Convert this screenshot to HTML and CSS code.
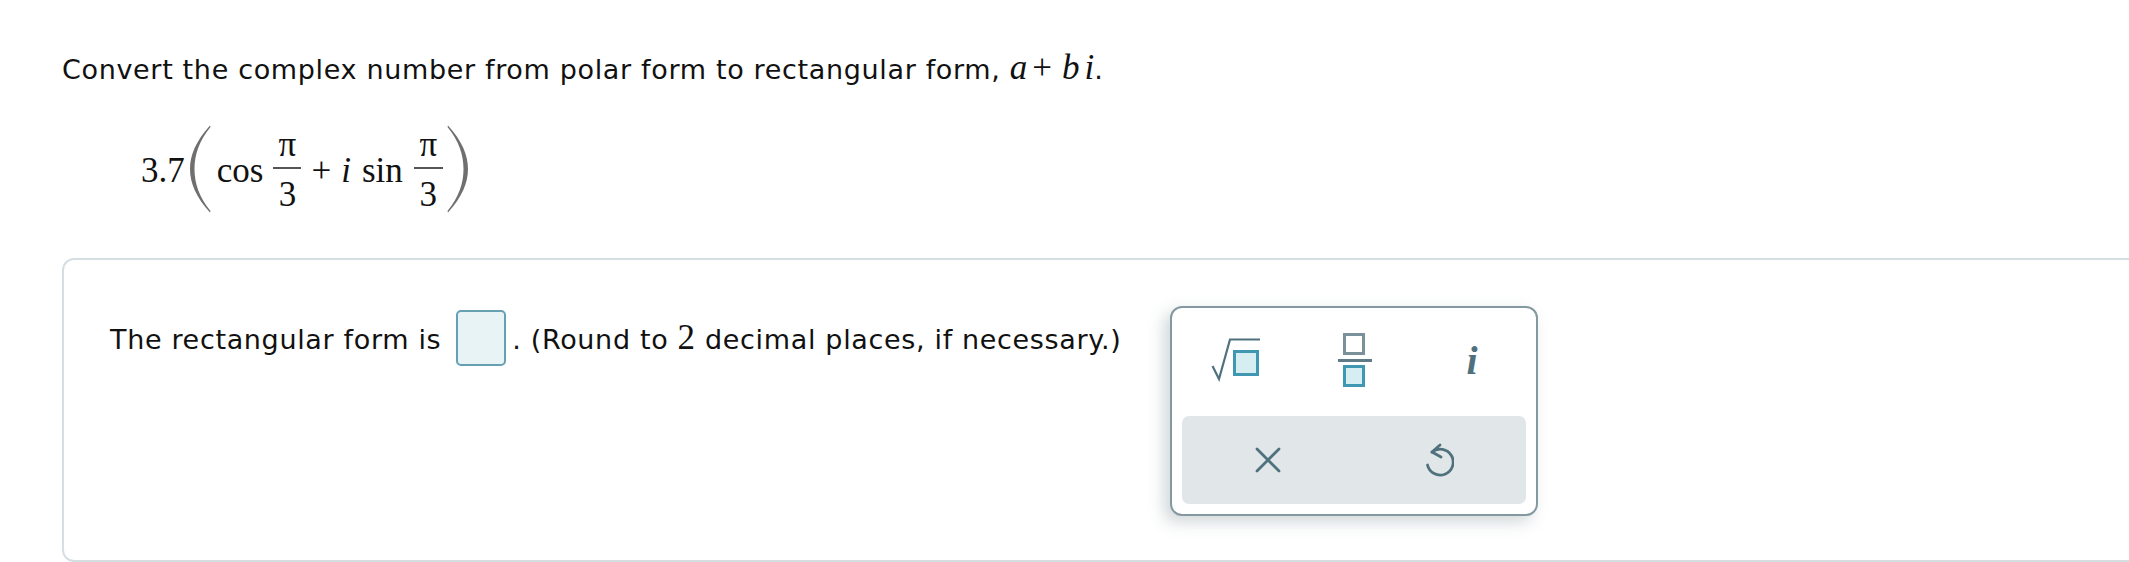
FILE: index.html
```html
<!DOCTYPE html>
<html>
<head>
    <meta charset="UTF-8">
    <title>Polar to Rectangular</title>
    <link rel="stylesheet" href="styles.css">
</head>
<body>
    <p class="question">Convert the complex number from polar form to rectangular form, <span class="math-inline"><i>a</i><span class="plus">+</span><i>b</i><i class="unit">i</i></span>.</p>

    <!-- 3.7(cos pi/3 + i sin pi/3) -->
    <div class="formula">
        <span class="mi coef">3.7</span>
        <svg class="paren" width="22" height="88" viewBox="0 0 22 88">
            <path d="M21 0.5 C 7 16, 1 30, 1 44 C 1 58, 7 72, 21 87.5 L 21.5 86 C 10 72, 5.5 58, 5.5 44 C 5.5 30, 10 16, 21.5 2 Z" fill="#6f6f6f"/>
        </svg>
        <span class="mi fn-cos">cos</span>
        <span class="frac"><span class="num">π</span><span class="den">3</span></span>
        <span class="mi op">+</span>
        <i class="mi imag">i</i>
        <span class="mi fn-sin">sin</span>
        <span class="frac frac-last"><span class="num">π</span><span class="den">3</span></span>
        <svg class="paren paren-right" width="22" height="88" viewBox="0 0 22 88">
            <path d="M1 0.5 C 15 16, 21 30, 21 44 C 21 58, 15 72, 1 87.5 L 0.5 86 C 12 72, 16.5 58, 16.5 44 C 16.5 30, 12 16, 0.5 2 Z" fill="#6f6f6f"/>
        </svg>
    </div>

    <div class="card">
        <div class="answer-row">
            <span class="answer-text">The rectangular form is</span>
            <span class="answer-box"></span>
            <span class="answer-text">. (Round to <span class="num-serif">2</span> decimal places, if necessary.)</span>
        </div>

        <div class="palette">
            <div class="palette-tools">
                <button class="tool tool-sqrt">
                    <svg width="50" height="44" viewBox="0 0 50 44">
                        <path d="M1.5 28 L8 41 L19 1.5 H49" fill="none" stroke="#4f717d" stroke-width="2.2"/>
                        <rect x="23.5" y="13.5" width="23" height="23" fill="#d6edf2" stroke="#3f97b2" stroke-width="3"/>
                    </svg>
                </button>
                <button class="tool">
                    <svg width="36" height="56" viewBox="0 0 36 56">
                        <rect x="7.5" y="2.5" width="19" height="19" fill="#fff" stroke="#7a919b" stroke-width="3"/>
                        <rect x="1" y="27" width="34" height="3" fill="#5e7b87"/>
                        <rect x="7.5" y="34.5" width="19" height="19" fill="#d6edf2" stroke="#3f97b2" stroke-width="3"/>
                    </svg>
                </button>
                <button class="tool tool-i"><i>i</i></button>
            </div>
            <div class="palette-actions">
                <button class="tool">
                    <svg width="26" height="26" viewBox="0 0 26 26">
                        <path d="M2 2 L24 24 M24 2 L2 24" fill="none" stroke="#4f717d" stroke-width="2.8" stroke-linecap="round"/>
                    </svg>
                </button>
                <button class="tool">
                    <svg width="28" height="36" viewBox="0 0 28 36">
                        <path d="M6 10 A13 13 0 1 1 1.5 23" fill="none" stroke="#4f717d" stroke-width="2.8" stroke-linecap="round"/>
                        <path d="M14 3 L6 10 L15 15" fill="none" stroke="#4f717d" stroke-width="2.8" stroke-linecap="round" stroke-linejoin="round"/>
                    </svg>
                </button>
            </div>
        </div>
    </div>
</body>
</html>
```

FILE: styles.css
```css
/* Page */
html, body {
    height: 100%;
}

body {
    margin: 0;
    padding: 48px 0 0 62px;
    box-sizing: border-box;
    overflow: hidden;
    background-color: white;
    color: #111;
    font-family: "DejaVu Sans", Verdana, sans-serif;
    font-size: 27px;
    letter-spacing: 0.66px;
}

/* Question */
.question {
    margin: 0;
    height: 40px;
    line-height: 40px;
}

.math-inline {
    font-family: "Liberation Serif", serif;
    font-size: 35px;
    letter-spacing: 0;
}

.plus {
    margin: 0 10px 0 5px;
}

.unit {
    margin-left: 5px;
}

/* Formula */
.formula {
    display: flex;
    align-items: flex-start;
    height: 100px;
    margin: 35px 0 0 79px;
    font-family: "Liberation Serif", serif;
    font-size: 35px;
    letter-spacing: 0;
    line-height: 42px;
}

.mi {
    margin-top: 27px;
}

.paren {
    flex: none;
    margin-top: 2px;
    margin-left: 4px;
}

.fn-cos {
    margin-left: 6px;
    margin-right: 10px;
}

.frac {
    display: flex;
    flex-direction: column;
    align-items: center;
    width: 28px;
}

.frac-last {
    width: 29px;
}

.num {
    width: 100%;
    border-bottom: 2px solid #555;
    line-height: 44px;
    text-align: center;
}

.den {
    line-height: 52px;
}

.op {
    margin-left: 10px;
    margin-right: 10px;
}

.imag {
    margin-right: 11px;
}

.fn-sin {
    margin-right: 11px;
}

/* Answer card */
.card {
    position: relative;
    box-sizing: border-box;
    height: 304px;
    margin: 35px -30px 0 0;
    padding: 50px 0 0 46px;
    border: 2px solid #d5dfe2;
    border-radius: 12px;
}

.answer-row {
    display: flex;
    align-items: center;
    white-space: pre;
}

.answer-text {
    margin-top: 3px;
}

.answer-box {
    box-sizing: border-box;
    width: 50px;
    height: 56px;
    margin: 0 6px 0 15px;
    border: 2px solid #66a0b2;
    border-radius: 5px;
    background-color: #e8f3f5;
}

.num-serif {
    font-family: "Liberation Serif", serif;
    font-size: 35px;
    line-height: 20px;
}

/* Math palette */
.palette {
    position: absolute;
    left: 1106px;
    top: 46px;
    box-sizing: border-box;
    display: flex;
    flex-direction: column;
    width: 368px;
    height: 210px;
    padding: 0 10px 10px;
    border: 2px solid #84999f;
    border-radius: 12px;
    background-color: white;
    box-shadow: -6px 6px 16px rgba(70, 95, 105, 0.25);
}

.palette-tools {
    box-sizing: border-box;
    display: grid;
    grid-template-columns: 124px 118px 122px;
    align-items: center;
    justify-items: center;
    height: 108px;
    margin: 0 -10px;
    padding-bottom: 4px;
}

.palette-actions {
    display: grid;
    grid-template-columns: 1fr 1fr;
    align-items: center;
    justify-items: center;
    height: 88px;
    border-radius: 7px;
    background-color: #e1e6e8;
}

.tool {
    display: flex;
    padding: 0;
    border: none;
    background: none;
    cursor: pointer;
}

.tool-sqrt {
    margin-left: 3px;
}

.tool-i {
    margin-right: 6px;
    font-family: "Liberation Serif", serif;
    font-size: 40px;
    font-weight: bold;
    color: #4f717d;
}
```
